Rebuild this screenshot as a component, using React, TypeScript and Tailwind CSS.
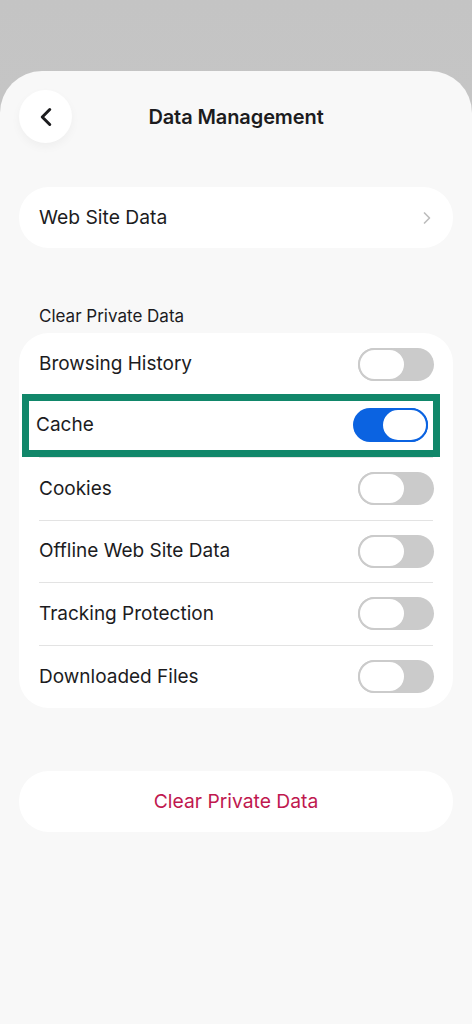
import { ChevronLeft, ChevronRight } from "lucide-react";

const rows = [
  { label: "Browsing History", on: false },
  { label: "Cache", on: true, highlight: true },
  { label: "Cookies", on: false },
  { label: "Offline Web Site Data", on: false },
  { label: "Tracking Protection", on: false },
  { label: "Downloaded Files", on: false },
];

function Toggle({ on }: { on: boolean }) {
  if (on) {
    return (
      <div className="flex h-[34px] w-[75px] items-center justify-end rounded-full bg-[#0b63e1]">
        <div className="h-[34px] w-[47px] rounded-full border-2 border-[#0b63e1] bg-white" />
      </div>
    );
  }
  return (
    <div className="flex h-[33px] w-[76px] items-center rounded-full bg-[#cbcbcb]">
      <div className="h-[33px] w-[48px] rounded-full border-2 border-[#cbcbcb] bg-white" />
    </div>
  );
}

export default function App() {
  return (
    <div
      className="flex h-[1024px] w-[472px] flex-col bg-gradient-to-b from-[#c4c4c4] to-[#cfcfcf] text-[#1c1c1e]"
      style={{ fontFamily: "Inter, 'Noto Sans', sans-serif" }}
    >
      <div className="h-[71px] shrink-0" />
      <div className="flex flex-1 flex-col rounded-t-[42px] bg-[#f8f8f8] px-[19px]">
        {/* Header */}
        <div className="relative mt-[19px] flex h-[53px] items-center justify-center">
          <div className="absolute left-0 top-0 flex h-[53px] w-[53px] items-center justify-center rounded-full bg-white shadow-[0_4px_10px_rgba(0,0,0,0.04)]">
            <ChevronLeft className="h-[30px] w-[30px] text-[#1c1c1e]" strokeWidth={2.4} />
          </div>
          <h1 className="text-[20px] font-semibold tracking-[-0.1px]">Data Management</h1>
        </div>

        {/* Web Site Data */}
        <div className="mt-[44px] flex h-[61px] items-center justify-between rounded-[30px] bg-white pl-[20px] pr-[16px]">
          <span className="text-[19.3px]">Web Site Data</span>
          <ChevronRight className="h-[20px] w-[20px] text-[#bdbdbd]" strokeWidth={2} />
        </div>

        <div className="mt-[57px] pl-[20px] text-[17px] leading-[22px]">Clear Private Data</div>

        {/* Toggles */}
        <div className="mt-[6px] flex flex-col rounded-[30px] bg-white">
          {rows.map((row, i) => (
            <div key={row.label} className="flex h-[62.5px] flex-col">
              {row.highlight ? (
                <div className="-mt-[2px] ml-[3px] flex h-[63px] w-[418px] items-center justify-between border-[7px] border-[#11876a] pl-[7px] pr-[5px]">
                  <span className="text-[19px]">{row.label}</span>
                  <Toggle on={row.on} />
                </div>
              ) : (
                <div className="flex flex-1 items-center justify-between pl-[20px] pr-[19px]">
                  <span className="text-[19px]">{row.label}</span>
                  <Toggle on={row.on} />
                </div>
              )}
              {i < rows.length - 1 && !row.highlight && i !== 0 && (
                <div className="mx-[20px] h-px bg-[#e3e3e3]" />
              )}
              {row.highlight && <div className="mx-[20px] mt-auto h-px bg-[#e3e3e3]" />}
            </div>
          ))}
        </div>

        {/* Clear button */}
        <div className="mt-[63px] flex h-[61px] items-center justify-center rounded-[30px] bg-white">
          <span className="text-[19.3px] text-[#c0184f]">Clear Private Data</span>
        </div>
      </div>
    </div>
  );
}
